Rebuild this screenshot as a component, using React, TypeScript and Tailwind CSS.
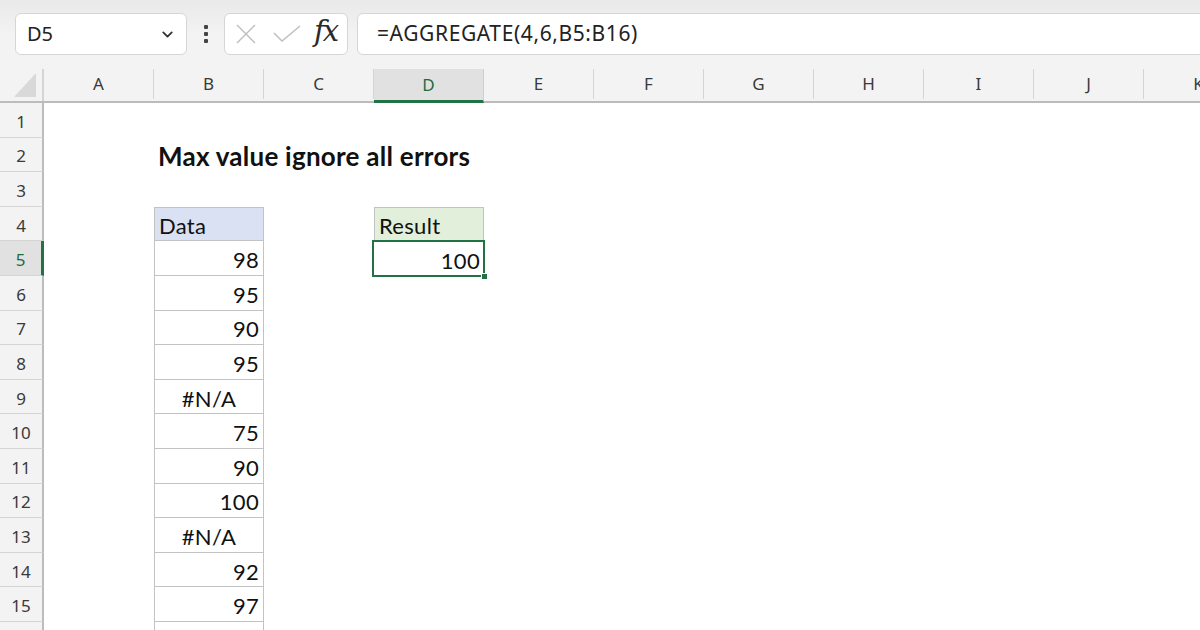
import { ChevronDown } from "lucide-react"

const COLS = ["A", "B", "C", "D", "E", "F", "G", "H", "I", "J", "K"]

// column B values for rows 5..16
const DATA: Record<number, string> = {
  5: "98",
  6: "95",
  7: "90",
  8: "95",
  9: "#N/A",
  10: "75",
  11: "90",
  12: "100",
  13: "#N/A",
  14: "92",
  15: "97",
  16: "",
}

function Toolbar() {
  return (
    <div className="h-[69px] bg-gradient-to-b from-[#e9e9e9] via-[#f3f3f3] to-[#f3f3f3] flex items-start pt-[13px] pl-[15px]">
      <div className="w-[172px] h-[42px] bg-white border border-[#d6d6d6] rounded-[6px] flex items-center pl-[11px] pr-[10px] justify-between">
        <span className="text-[20px] text-[#222] font-['Noto_Sans',sans-serif]">D5</span>
        <ChevronDown className="w-[17px] h-[17px] text-[#333]" strokeWidth={2.6} />
      </div>
      <div className="w-[37px] h-[42px] flex flex-col items-center justify-center gap-[3px]">
        <span className="w-[4px] h-[4px] bg-[#444] rounded-[1px]" />
        <span className="w-[4px] h-[4px] bg-[#444] rounded-[1px]" />
        <span className="w-[4px] h-[4px] bg-[#444] rounded-[1px]" />
      </div>
      <div className="w-[124px] h-[42px] bg-white border border-[#d6d6d6] rounded-[6px] flex items-center pl-[10px]">
        <svg width="22" height="22" viewBox="0 0 22 22" className="mr-[16px]">
          <path d="M2 2 L20 20 M20 2 L2 20" stroke="#bdbdbd" strokeWidth="1.4" fill="none" />
        </svg>
        <svg width="28" height="20" viewBox="0 0 28 20" className="mr-[13px]">
          <path d="M1 9 L9 17 L27 2" stroke="#bdbdbd" strokeWidth="1.4" fill="none" />
        </svg>
        <span className="italic text-[29px] leading-none text-[#2a2a2a] font-['DejaVu_Serif',serif] tracking-[-2px] -mt-[5px]">fx</span>
      </div>
      <div className="flex-1 ml-[9px] -mr-[12px] h-[42px] bg-white border border-[#d6d6d6] rounded-[6px] flex items-center pl-[19px]">
        <span className="text-[21px] tracking-[0.6px] text-[#222] font-['Noto_Sans',sans-serif]">=AGGREGATE(4,6,B5:B16)</span>
      </div>
    </div>
  )
}

function ColumnHeaders() {
  return (
    <div className="grid grid-cols-[44px_repeat(11,110px)] h-[34px] bg-[#f3f3f3] border-b-2 border-[#bcbcbc] font-['Noto_Sans',sans-serif]">
      <div className="relative border-r-2 border-[#d4d4d4] flex items-end justify-end pr-[6px] pb-[4px]">
        <svg width="22" height="24" viewBox="0 0 22 24">
          <path d="M22 0 L22 24 L0 24 Z" fill="#d9d9d9" />
        </svg>
      </div>
      {COLS.map((c) => {
        const sel = c === "D"
        return (
          <div
            key={c}
            className={
              sel
                ? "flex items-center justify-center text-[17px] bg-[#e1e1e1] text-[#1e6b40] border-b-[3px] border-[#217346] -mb-[2px] border-r border-r-[#cfcfcf]"
                : "flex items-center justify-center text-[17px] text-[#3a3a3a] border-r border-[#d4d4d4] mb-[2px]"
            }
          >
            {c}
          </div>
        )
      })}
    </div>
  )
}

function Cell({ row, col }: { row: number; col: string }) {
  const base = "relative h-full flex items-center pt-[4px] px-[4px] text-[22px] leading-none tracking-[0.3px] text-[#111]"
  if (col === "B") {
    if (row === 2) {
      return (
        <div className={base}>
          <span className="whitespace-nowrap font-bold text-[26px] tracking-[0.25px] -mt-[2px]">Max value ignore all errors</span>
        </div>
      )
    }
    if (row === 4) {
      return <div className={base + " bg-[#d9e1f2] border border-[#c3c3c3]"}>Data</div>
    }
    if (row >= 5) {
      const v = DATA[row]
      const err = v.startsWith("#")
      return (
        <div className={base + " border-x border-b border-[#c3c3c3] " + (err ? "justify-center" : "justify-end")}>
          {v}
        </div>
      )
    }
  }
  if (col === "D") {
    if (row === 4) {
      return <div className={base + " bg-[#e2efda] border border-[#c3c3c3]"}>Result</div>
    }
    if (row === 5) {
      return (
        <div className={base + " justify-end"}>
          100
          <div className="absolute -left-[2px] -top-[1px] -right-[1px] -bottom-[1px] border-2 border-[#217346]" />
          <div className="absolute -right-[4px] -bottom-[4px] w-[7px] h-[7px] bg-[#217346] border border-white" />
        </div>
      )
    }
  }
  return <div className={base} />
}

export default function App() {
  const rows = Array.from({ length: 16 }, (_, i) => i + 1)
  return (
    <div className="w-[1200px] h-[630px] overflow-hidden bg-white font-['Lato',sans-serif]">
      <Toolbar />
      <ColumnHeaders />
      {rows.map((r) => {
        const sel = r === 5
        return (
          <div key={r} className="grid grid-cols-[44px_repeat(11,110px)] grid-rows-[34.6px] h-[34.6px]">
            <div
              className={
                sel
                  ? "flex items-center justify-center pt-[3px] text-[17px] leading-none font-['Noto_Sans',sans-serif] bg-[#e1e1e1] text-[#1e6b40] border-b border-[#d4d4d4] border-r-[3px] border-r-[#217346]"
                  : "flex items-center justify-center pt-[3px] text-[17px] leading-none font-['Noto_Sans',sans-serif] bg-[#f3f3f3] text-[#3a3a3a] border-b border-[#d4d4d4] border-r-2 border-r-[#bcbcbc]"
              }
            >
              {r}
            </div>
            {COLS.map((c) => (
              <Cell key={c} row={r} col={c} />
            ))}
          </div>
        )
      })}
    </div>
  )
}
